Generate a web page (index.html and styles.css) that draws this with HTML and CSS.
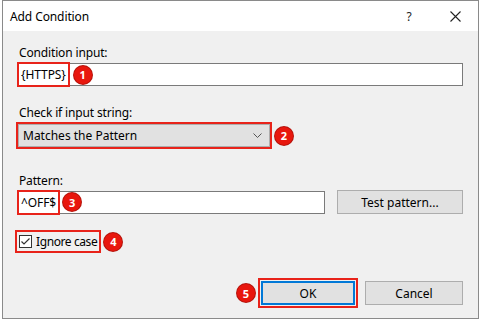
FILE: index.html
```html
<!DOCTYPE html>
<html>
<head>
<meta charset="utf-8">
<link rel="stylesheet" href="styles.css">
</head>
<body>
<div class="window">
  <div class="titlebar">
    <span class="title">Add Condition</span>
    <span class="tb-btn help">?</span>
    <span class="tb-btn close">
      <svg width="11" height="11" viewBox="0 0 11 11"><path d="M0.5 0.5L10.5 10.5M10.5 0.5L0.5 10.5" stroke="#222" stroke-width="1.1" fill="none"/></svg>
    </span>
  </div>
  <div class="content">
    <div class="label l1">Condition input:</div>
    <div class="field f1"><span class="hl hl-text">{HTTPS}</span><span class="badge b1">1</span></div>

    <div class="label l2">Check if input string:</div>
    <div class="row r2">
      <div class="hl hl-select">
        <div class="select"><span>Matches the Pattern</span>
          <svg width="9" height="5" viewBox="0 0 9 5"><path d="M0.5 0.5L4.5 4.5L8.5 0.5" stroke="#555" stroke-width="1" fill="none"/></svg>
        </div>
      </div>
      <span class="badge b2">2</span>
    </div>

    <div class="label l3">Pattern:</div>
    <div class="row r3">
      <div class="field f3"><span class="hl hl-text">^OFF$</span><span class="badge b3">3</span></div>
      <div class="btn test">Test pattern...</div>
    </div>

    <div class="row r4">
      <div class="hl hl-check">
        <svg class="cb" width="13" height="13" viewBox="0 0 13 13"><rect x="0.5" y="0.5" width="12" height="12" fill="#fff" stroke="#333"/><path d="M2.5 6.5L5 9L10.5 3.5" stroke="#333" stroke-width="1.2" fill="none"/></svg>
        <span class="cb-text">Ignore case</span>
      </div>
      <span class="badge b4">4</span>
    </div>

    <div class="row r5">
      <span class="badge b5">5</span>
      <div class="hl hl-ok"><div class="btn ok">OK</div></div>
      <div class="btn cancel">Cancel</div>
    </div>
  </div>
</div>
</body>
</html>
```
FILE: styles.css
```css
html, body {
  margin: 0;
  padding: 0;
  background: #ffffff;
}
body {
  font-family: "Noto Sans", "Open Sans", sans-serif;
  font-size: 12px;
  color: #000;
}
.window {
  margin-left: 2px;
  width: 475px;
  height: 317px;
  border: 1px solid #8a8a8a;
  display: flex;
  flex-direction: column;
  background: #f0f0f0;
}
.titlebar {
  height: 30px;
  background: #ffffff;
  display: flex;
  align-items: center;
  padding-top: 1px;
  box-sizing: border-box;
}
.title {
  flex: 1;
  padding-left: 7px;
  font-size: 12px;
  letter-spacing: -0.1px;
}
.tb-btn {
  width: 46px;
  display: flex;
  justify-content: center;
  align-items: center;
}
.help {
  font-size: 12px;
  color: #222;
}
.close svg {
  display: block;
}
.content {
  flex: 1;
  display: flex;
  flex-direction: column;
  padding: 14px 15px 0 12px;
}
.label {
  line-height: 15px;
  padding-left: 4px;
  letter-spacing: -0.15px;
}
.field {
  height: 23px;
  box-sizing: border-box;
  border: 1px solid #7a7a7a;
  background: #fff;
  display: flex;
  align-items: center;
  margin-left: 3px;
}
.f1 { margin-top: 3px; }
.hl {
  border: 2px solid #e8231a;
  box-sizing: border-box;
}
.hl-text {
  height: 25px;
  margin: -1px 0 -1px -2px;
  padding: 0 2px;
  display: flex;
  align-items: center;
  letter-spacing: -0.1px;
}
.badge {
  width: 18px;
  height: 18px;
  border-radius: 50%;
  background: #e8170e;
  box-shadow: 0 0 0 1px #b5120a;
  color: #fff;
  font-weight: bold;
  font-size: 11px;
  display: flex;
  align-items: center;
  justify-content: center;
  flex: none;
}
.b1 { margin-left: 4px; }
.l2 { margin-top: 19px; }
.row {
  display: flex;
  align-items: center;
}
.r2 { margin-top: 2px; margin-left: 1px; }
.hl-select {
  width: 256px;
  height: 27px;
}
.select {
  height: 23px;
  box-sizing: border-box;
  border: 1px solid #adadad;
  background: #e1e1e1;
  display: flex;
  align-items: center;
  justify-content: space-between;
  padding: 0 7px 0 4px;
}
.b2 { margin-left: 3px; }
.l3 { margin-top: 24px; }
.r3 { margin-top: 2px; }
.f3 { width: 309px; }
.b3 { margin-left: 3px; }
.btn {
  box-sizing: border-box;
  border: 1px solid #adadad;
  background: #e1e1e1;
  display: flex;
  align-items: center;
  justify-content: center;
}
.test {
  margin-left: 12px;
  width: 127px;
  height: 24px;
}
.r4 { margin-top: 16px; }
.hl-check {
  height: 23px;
  display: flex;
  align-items: center;
  padding: 0 2px 0 2px;
  gap: 4px;
  white-space: nowrap;
}
.cb-text { letter-spacing: -0.4px; }
.cb { display: block; }
.b4 { margin-left: 3px; }
.r5 {
  margin-top: 25px;
  justify-content: flex-end;
}
.b5 { margin-right: 3px; }
.hl-ok {
  padding: 1px;
}
.ok {
  width: 94px;
  height: 24px;
  border: 2px solid #0078d7;
}
.cancel {
  margin-left: 7px;
  width: 98px;
  height: 24px;
}
```
